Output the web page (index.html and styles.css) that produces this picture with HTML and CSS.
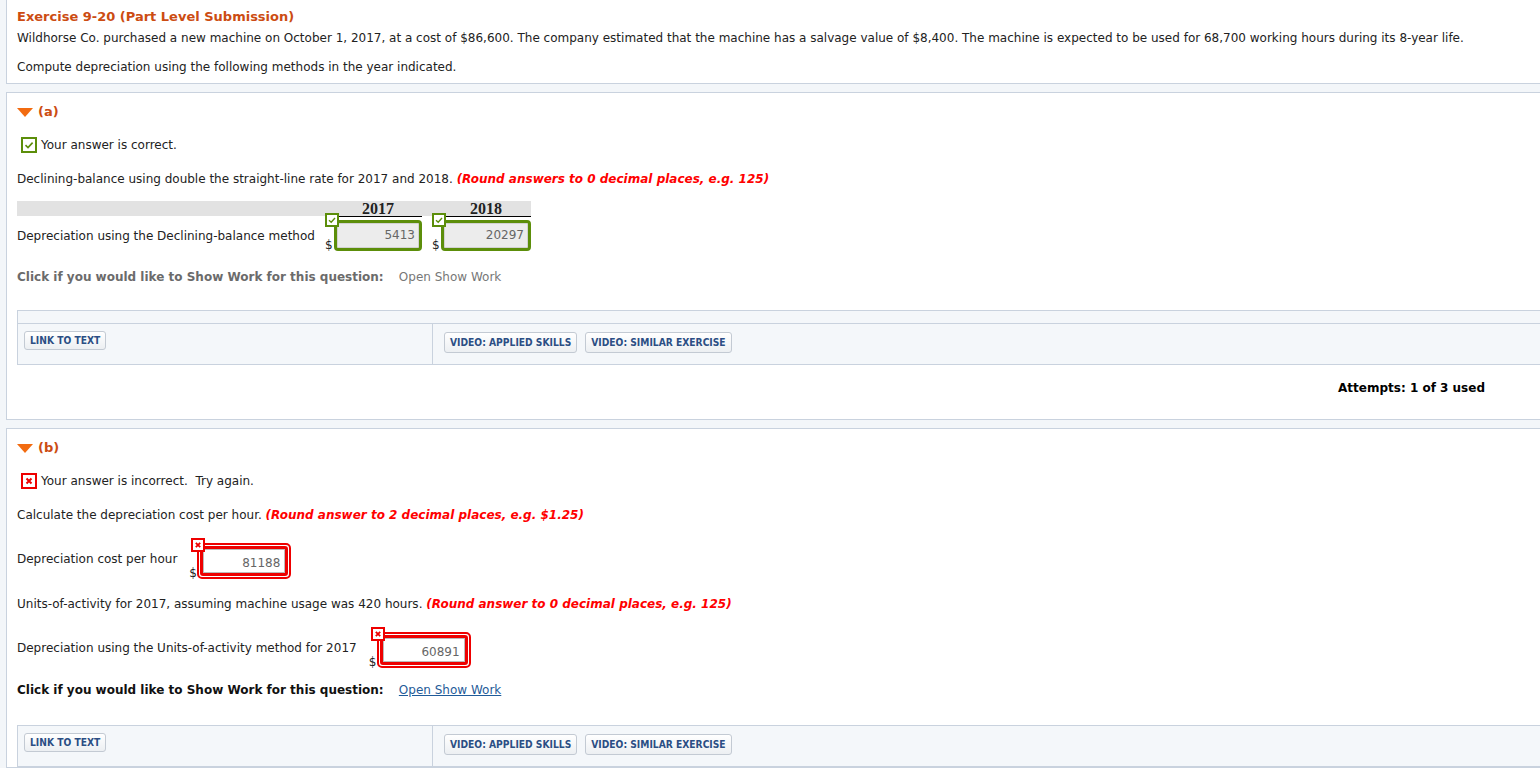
FILE: index.html
```html
<!DOCTYPE html>
<html lang="en">
<head>
  <meta charset="UTF-8">
  <title>Exercise 9-20</title>
  <link rel="stylesheet" href="styles.css">
</head>
<body>

  <div class="intro box">
    <h1 class="ex-title">Exercise 9-20 (Part Level Submission)</h1>
    <p class="stem">Wildhorse Co. purchased a new machine on October 1, 2017, at a cost of $86,600. The company estimated that the machine has a salvage value of $8,400. The machine is expected to be used for 68,700 working hours during its 8-year life.</p>
    <p class="stem second">Compute depreciation using the following methods in the year indicated.</p>
  </div>

  <!-- part (a) -->
  <div class="part box">
    <div class="part-head"><span class="tri"></span>(a)</div>

    <div class="status">
      <span class="mark ok"><svg width="12" height="12" viewBox="0 0 12 12"><path d="M2.5 6.2 L5 8.6 L9.6 3.6" fill="none" stroke="#5c8e0a" stroke-width="1.6"/></svg></span>
      Your answer is correct.
    </div>

    <p class="question">Declining-balance using double the straight-line rate for 2017 and 2018. <em class="hint">(Round answers to 0 decimal places, e.g. 125)</em></p>

    <div class="ans-grid">
      <div class="grid-head"></div>
      <div class="grid-head year"><span>2017</span></div>
      <div class="grid-head year next"><span>2018</span></div>

      <div class="row-label">Depreciation using the Declining-balance method</div>
      <div class="cell">
        <span class="mini ok"><svg width="10" height="10" viewBox="0 0 10 10"><path d="M2 5.2 L4.2 7.2 L8 3" fill="none" stroke="#5c8e0a" stroke-width="1.4"/></svg></span>
        <span class="dollar">$</span>
        <span class="good-input">5413</span>
      </div>
      <div class="cell next">
        <span class="mini ok"><svg width="10" height="10" viewBox="0 0 10 10"><path d="M2 5.2 L4.2 7.2 L8 3" fill="none" stroke="#5c8e0a" stroke-width="1.4"/></svg></span>
        <span class="dollar">$</span>
        <span class="good-input wide">20297</span>
      </div>
    </div>

    <p class="show-work off">Click if you would like to Show Work for this question: <span class="sw-link">Open Show Work</span></p>

    <div class="resources">
      <div class="res-strip"></div>
      <div class="res-row">
        <div class="res-left"><button class="res-btn">LINK TO TEXT</button></div>
        <div class="res-right">
          <button class="res-btn">VIDEO: APPLIED SKILLS</button>
          <button class="res-btn">VIDEO: SIMILAR EXERCISE</button>
        </div>
      </div>
    </div>

    <div class="attempts">Attempts: 1 of 3 used</div>
  </div>

  <!-- part (b) -->
  <div class="part box">
    <div class="part-head"><span class="tri"></span>(b)</div>

    <div class="status">
      <span class="mark bad"><svg width="10" height="10" viewBox="0 0 10 10"><path d="M2.5 2.5 L7.5 7.5 M7.5 2.5 L2.5 7.5" stroke="#e00" stroke-width="2"/></svg></span>
      Your answer is incorrect.&nbsp; Try again.
    </div>

    <p class="question">Calculate the depreciation cost per hour. <em class="hint">(Round answer to 2 decimal places, e.g. $1.25)</em></p>

    <div class="ans-line">
      <div class="row-label">Depreciation cost per hour</div>
      <div class="cell">
        <span class="mini bad"><svg width="8" height="8" viewBox="0 0 8 8"><path d="M1.8 1.8 L6.2 6.2 M6.2 1.8 L1.8 6.2" stroke="#e00" stroke-width="1.8"/></svg></span>
        <span class="dollar">$</span>
        <span class="bad-wrap"><span class="bad-input">81188</span></span>
      </div>
    </div>

    <p class="question after-input">Units-of-activity for 2017, assuming machine usage was 420 hours. <em class="hint">(Round answer to 0 decimal places, e.g. 125)</em></p>

    <div class="ans-line">
      <div class="row-label">Depreciation using the Units-of-activity method for 2017</div>
      <div class="cell">
        <span class="mini bad"><svg width="8" height="8" viewBox="0 0 8 8"><path d="M1.8 1.8 L6.2 6.2 M6.2 1.8 L1.8 6.2" stroke="#e00" stroke-width="1.8"/></svg></span>
        <span class="dollar">$</span>
        <span class="bad-wrap"><span class="bad-input">60891</span></span>
      </div>
    </div>

    <p class="show-work">Click if you would like to Show Work for this question: <a class="sw-link" href="#">Open Show Work</a></p>

    <div class="resources late">
      <div class="res-row">
        <div class="res-left"><button class="res-btn">LINK TO TEXT</button></div>
        <div class="res-right">
          <button class="res-btn">VIDEO: APPLIED SKILLS</button>
          <button class="res-btn">VIDEO: SIMILAR EXERCISE</button>
        </div>
      </div>
    </div>
  </div>

</body>
</html>
```

FILE: styles.css
```css
body {
  margin: 0;
  background: #f3f6f9;
  font-family: "DejaVu Sans", Verdana, sans-serif;
  font-size: 12px;
  line-height: 16px;
  color: #222;
  overflow: hidden;
}

p {
  margin: 0;
}

.box {
  margin-left: 6px;
  width: 1570px;
  background: #fff;
  border: 1px solid #c9d2de;
  border-top: none;
  padding: 0 10px;
  box-sizing: border-box;
}

.intro {
  padding-top: 9px;
  padding-bottom: 8px;
}

.ex-title {
  margin: 0;
  font-size: 13px;
  line-height: 16px;
  color: #cc4c12;
}

.stem {
  margin-top: 5px;
}

.stem.second {
  margin-top: 13px;
}

.part {
  margin-top: 8px;
  border-top: 1px solid #c9d2de;
  padding-top: 11px;
}

.part-head {
  display: flex;
  align-items: center;
  font-size: 13px;
  font-weight: bold;
  color: #cc4c12;
  height: 16px;
}

.tri {
  width: 0;
  height: 0;
  border-left: 8px solid transparent;
  border-right: 8px solid transparent;
  border-top: 9px solid #f26b10;
  margin-right: 5px;
}

.status {
  display: flex;
  align-items: center;
  margin-top: 17px;
  margin-left: 4px;
  height: 16px;
}

.mark {
  width: 16px;
  height: 16px;
  box-sizing: border-box;
  display: inline-flex;
  align-items: center;
  justify-content: center;
  background: #fff;
  margin-right: 4px;
}

.mark.ok {
  border: 2px solid #5c8e0a;
}

.mark.bad {
  border: 2px solid #e00;
}

.question {
  margin-top: 18px;
}

.question.after-input {
  margin-top: 17px;
}

.hint {
  color: #f00;
  font-weight: bold;
}

/* answer table for part (a) */
.ans-grid {
  display: grid;
  grid-template-columns: 308px 97px 109px;
  margin-top: 14px;
  width: 514px;
  background: linear-gradient(#e2e2e2, #e2e2e2) no-repeat 0 0 / 100% 15px;
}

.ans-grid .next {
  margin-left: 10px;
}

.grid-head {
  height: 15px;
}

.year {
  padding-left: 9px;
}

.year span {
  display: block;
  height: 15px;
  border-bottom: 1px solid #000;
  text-align: center;
  font-family: "Liberation Serif", "Times New Roman", serif;
  font-weight: bold;
  font-size: 16px;
  line-height: 15px;
}

.ans-grid .row-label {
  padding-top: 12px;
}

.ans-grid .cell {
  margin-top: 4px;
}

.cell {
  position: relative;
  display: flex;
  align-items: flex-end;
}

.dollar {
  width: 9px;
  line-height: 12px;
  color: #222;
}

.mini {
  position: absolute;
  left: 0;
  top: -7px;
  width: 14px;
  height: 14px;
  box-sizing: border-box;
  background: #fff;
  display: flex;
  align-items: center;
  justify-content: center;
  z-index: 2;
}

.mini.ok {
  border: 2px solid #5c8e0a;
}

.mini.bad {
  border: 2px solid #e00;
  left: 2px;
  top: -5px;
}

.good-input {
  width: 88px;
  height: 31px;
  box-sizing: border-box;
  border: 3px solid #5c8e0a;
  border-radius: 4px;
  background: #ececec;
  box-shadow: inset 0 0 0 1px #d2d2d2;
  text-align: right;
  padding: 4px 4px 0 0;
  color: #666;
  font-size: 12px;
}

.good-input.wide {
  width: 90px;
}

.ans-line {
  display: flex;
  align-items: flex-start;
  margin-top: 20px;
}

.ans-line .row-label {
  margin-right: 12px;
  padding-top: 8px;
}

.ans-line .dollar {
  width: 8px;
}

.bad-wrap {
  display: block;
  border: 2px solid #e00;
  border-radius: 5px;
  padding: 1px;
  background: #fff;
}

.bad-input {
  display: block;
  width: 88px;
  height: 30px;
  box-sizing: border-box;
  border: 3px solid #e00;
  border-radius: 3px;
  box-shadow: inset 0 0 0 1px #bbb;
  text-align: right;
  padding: 6px 5px 0 0;
  color: #666;
}

.show-work {
  margin-top: 14px;
  font-weight: bold;
  color: #111;
}

.show-work .sw-link {
  font-weight: normal;
  margin-left: 11px;
  color: #1f5b99;
}

.show-work.off {
  margin-top: 18px;
  color: #6b6b6b;
}

.show-work.off .sw-link {
  color: #777;
}

.resources {
  margin-top: 25px;
  border-top: 1px solid #c9d2de;
  border-bottom: 1px solid #c9d2de;
  border-left: 1px solid #c9d2de;
  background: #f4f7fa;
}

.resources.late {
  margin-top: 27px;
}

.res-strip {
  height: 12px;
  border-bottom: 1px solid #c9d2de;
}

.res-row {
  display: flex;
  height: 40px;
}

.res-left {
  width: 415px;
  border-right: 1px solid #c9d2de;
  padding: 7px 0 0 6px;
  box-sizing: border-box;
}

.res-right {
  display: flex;
  gap: 8px;
  padding: 8px 0 0 11px;
  align-items: flex-start;
}

.res-btn {
  font-family: "DejaVu Sans Condensed", "DejaVu Sans", sans-serif;
  font-size: 10.2px;
  font-weight: bold;
  line-height: 11px;
  color: #2b4e84;
  background: linear-gradient(#fff, #eceff2);
  border: 1px solid #c3cad3;
  border-radius: 3px;
  padding: 3px 5px;
  cursor: pointer;
}

.res-right .res-btn {
  padding: 4px 5px;
}

.attempts {
  width: 1468px;
  text-align: right;
  font-weight: bold;
  color: #000;
  padding: 15px 0 23px;
}
```
